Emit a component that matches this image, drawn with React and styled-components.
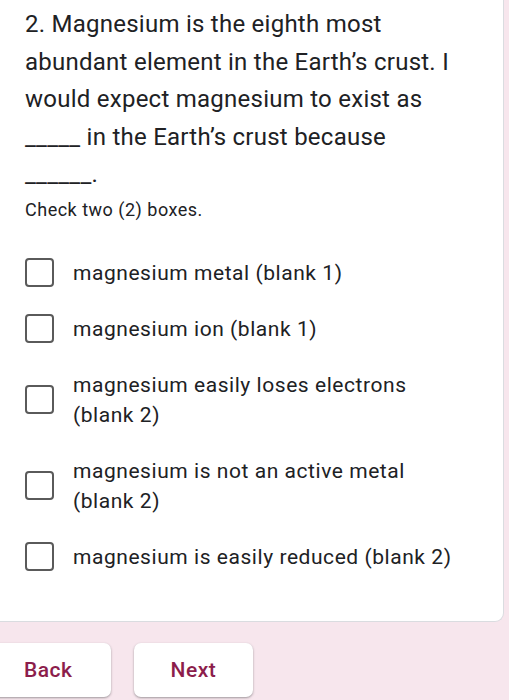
import React from "react";
import styled, { createGlobalStyle } from "styled-components";

const Global = createGlobalStyle`
  html, body { margin: 0; padding: 0; background: #f7e6ed; }
  body { font-family: Roboto, "Noto Sans", Arial, sans-serif; color: #202124; overflow: hidden; }
`;

const Page = styled.div`
  width: 509px;
  height: 700px;
  overflow: hidden;
  background: #f7e6ed;
`;

const Shift = styled.div`
  margin-left: -14px;
`;

const Card = styled.div`
  width: 518px;
  box-sizing: border-box;
  background: #fff;
  border-right: 1px solid #dadce0;
  border-bottom: 1px solid #dadce0;
  border-bottom-right-radius: 9px;
  padding: 6px 20px 49px 39px;
`;

const Question = styled.div`
  font-size: 24px;
  line-height: 37.5px;
  letter-spacing: 0.25px;
  color: #202124;
  white-space: nowrap;
`;

const Hint = styled.div`
  margin-top: 4px;
  font-size: 18px;
  line-height: 24px;
  letter-spacing: 0.5px;
  color: #202124;
`;

const Options = styled.div`
  margin-top: 36px;
  display: flex;
  flex-direction: column;
  gap: 26px;
`;

const Row = styled.label`
  display: flex;
  align-items: center;
  gap: 19px;
`;

const Box = styled.span`
  flex: none;
  width: 29px;
  height: 29px;
  box-sizing: border-box;
  border: 2.5px solid #5a5a5a;
  border-radius: 4px;
`;

const OptionText = styled.span`
  display: flex;
  flex-direction: column;
  font-size: 21px;
  line-height: 30px;
  letter-spacing: 0.55px;
  color: #202124;
  white-space: nowrap;
`;

const Footer = styled.div`
  display: flex;
  gap: 23px;
  margin-top: 21px;
`;

const Button = styled.button`
  height: 54px;
  padding: 0 ${(p) => p.$pad}px;
  background: #fff;
  border: none;
  border-radius: 7px;
  box-shadow: 0 1px 2px rgba(60, 64, 67, 0.35), 0 1px 3px rgba(60, 64, 67, 0.15);
  font-family: Roboto, "Noto Sans", Arial, sans-serif;
  font-size: 21px;
  font-weight: 500;
  letter-spacing: 0.5px;
  color: #8c1d4b;
`;

const lines = [
  "2. Magnesium is the eighth most",
  "abundant element in the Earth’s crust. I",
  "would expect magnesium to exist as",
  "_____ in the Earth’s crust because",
  "______.",
];

const options = [
  ["magnesium metal (blank 1)"],
  ["magnesium ion (blank 1)"],
  ["magnesium easily loses electrons", "(blank 2)"],
  ["magnesium is not an active metal", "(blank 2)"],
  ["magnesium is easily reduced (blank 2)"],
];

export default function App() {
  return (
    <Page>
      <Global />
      <Shift>
        <Card>
          <Question>
            {lines.map((l) => (
              <div key={l}>{l}</div>
            ))}
          </Question>
          <Hint>Check two (2) boxes.</Hint>
          <Options>
            {options.map((o) => (
              <Row key={o[0]}>
                <Box />
                <OptionText>
                  {o.map((l) => (
                    <span key={l}>{l}</span>
                  ))}
                </OptionText>
              </Row>
            ))}
          </Options>
        </Card>
        <Footer>
          <Button $pad={38}>Back</Button>
          <Button $pad={37}>Next</Button>
        </Footer>
      </Shift>
    </Page>
  );
}
